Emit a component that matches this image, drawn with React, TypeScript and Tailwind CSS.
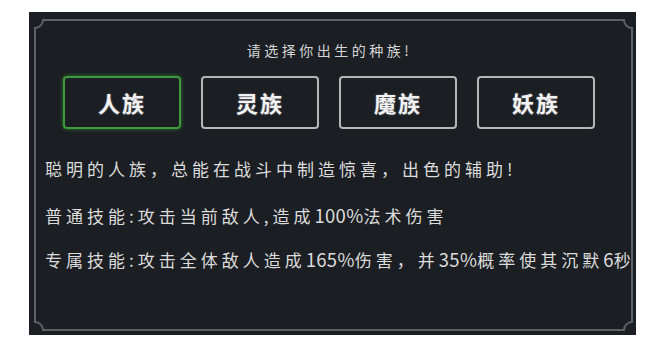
import React from "react";

const races = ["人族", "灵族", "魔族", "妖族"];

function Frame() {
  const l = 6, t = 8, r = 603, b = 318, c = 8;
  const d = `M ${l} ${t + c} A ${c} ${c} 0 0 0 ${l + c} ${t} L ${r - c} ${t} A ${c} ${c} 0 0 0 ${r} ${t + c} L ${r} ${b - c} A ${c} ${c} 0 0 0 ${r - c} ${b} L ${l + c} ${b} A ${c} ${c} 0 0 0 ${l} ${b - c} Z`;
  return (
    <svg
      className="absolute inset-0 pointer-events-none"
      width="607"
      height="323"
      viewBox="0 0 607 323"
    >
      <path d={d} fill="none" stroke="#5e6166" strokeWidth="2" />
    </svg>
  );
}

function N({ children }: { children: React.ReactNode }) {
  return <span className="text-[18.5px] tracking-[0.3px]">{children}</span>;
}

export default function App() {
  const font = { fontFamily: '"Noto Sans CJK SC", "Noto Sans", sans-serif' };
  return (
    <div className="w-[666px] h-[352px] bg-white pt-[12px] pl-[29px]" style={font}>
      <div className="relative w-[607px] h-[323px] bg-[#1b1e23] pt-[29px]">
        <Frame />
        <div className="relative text-center text-[14px] leading-[18px] tracking-[3.5px] text-[#d6d6d6] pr-[6px]">
          请选择你出生的种族!
        </div>
        <div className="relative flex gap-[20px] pl-[34px] mt-[17px]">
          {races.map((r, i) => (
            <div
              key={r}
              className={
                i === 0
                  ? "w-[118px] h-[53px] rounded-[4px] border-2 border-[#3f9a3f] shadow-[0_0_4px_#2f7a2f] flex items-center justify-center"
                  : "w-[118px] h-[53px] rounded-[4px] border-2 border-[#b4b6b8] flex items-center justify-center"
              }
            >
              <span className="text-[22px] leading-none font-bold tracking-[2px] text-[#f2f2f2] pb-[2px] [text-shadow:0_0_2px_#ffffff66]">
                {r}
              </span>
            </div>
          ))}
        </div>
        <div className="relative pl-[16px] text-[17px] leading-[24px] tracking-[4px] text-[#dcdcdc] whitespace-nowrap">
          <div className="mt-[28px]">聪明的人族，总能在战斗中制造惊喜，出色的辅助!</div>
          <div className="mt-[22px]">
            普通技能:攻击当前敌人,造成<N>100%</N>法术伤害
          </div>
          <div className="mt-[19px]">
            专属技能:攻击全体敌人造成<N>165%</N>伤害，并<N>35%</N>概率使其沉默<N>6</N>秒
          </div>
        </div>
      </div>
    </div>
  );
}
